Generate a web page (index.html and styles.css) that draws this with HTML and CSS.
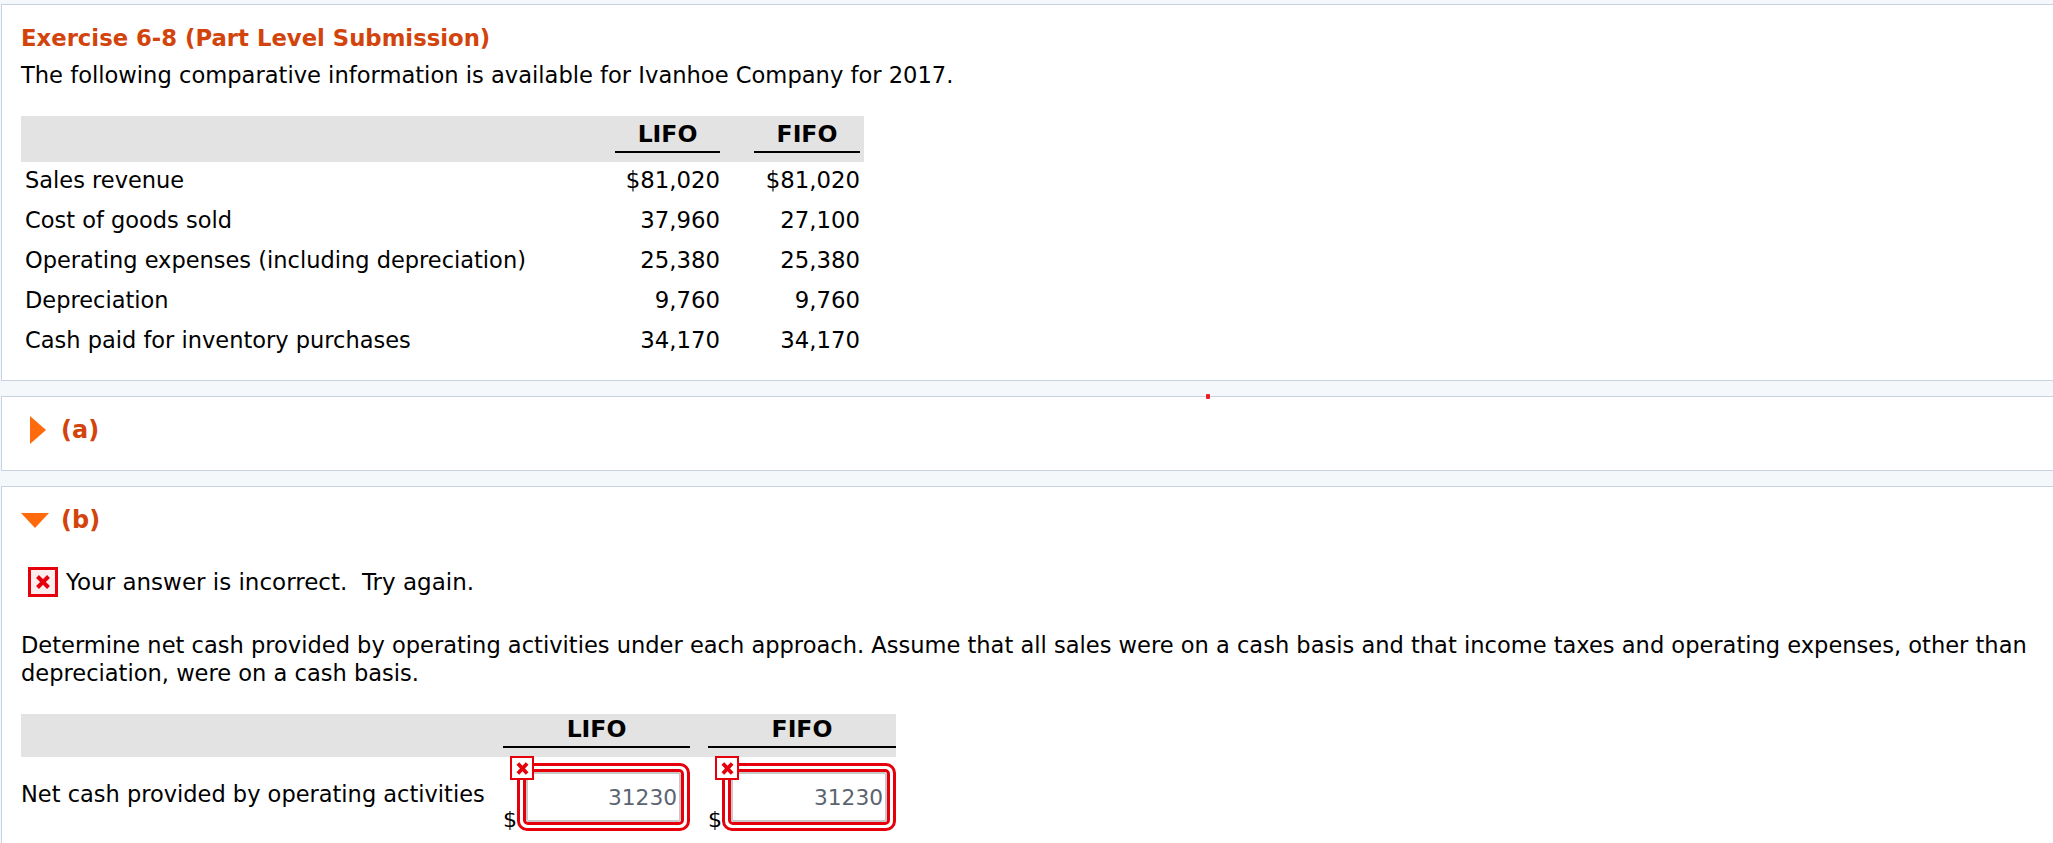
FILE: index.html
```html
<!DOCTYPE html>
<html lang="en">
<head>
    <meta charset="UTF-8">
    <title>Exercise 6-8</title>
    <link rel="stylesheet" href="styles.css">
</head>
<body>
    <div class="red-dot"></div>

    <div class="panel panel-intro">
        <h1 class="title">Exercise 6-8 (Part Level Submission)</h1>
        <p class="intro">The following comparative information is available for Ivanhoe Company for 2017.</p>

        <table class="info-table">
            <thead>
                <tr>
                    <th class="col-label"></th>
                    <th class="col-lifo"><span class="head-rule">LIFO</span></th>
                    <th class="col-fifo"><span class="head-rule">FIFO</span></th>
                </tr>
            </thead>
            <tbody>
                <tr><td>Sales revenue</td><td class="num">$81,020</td><td class="num">$81,020</td></tr>
                <tr><td>Cost of goods sold</td><td class="num">37,960</td><td class="num">27,100</td></tr>
                <tr><td>Operating expenses (including depreciation)</td><td class="num">25,380</td><td class="num">25,380</td></tr>
                <tr><td>Depreciation</td><td class="num">9,760</td><td class="num">9,760</td></tr>
                <tr><td>Cash paid for inventory purchases</td><td class="num">34,170</td><td class="num">34,170</td></tr>
            </tbody>
        </table>
    </div>

    <div class="panel panel-part panel-closed">
        <div class="part-head">
            <svg class="arrow arrow-right" viewBox="0 0 16 28"><polygon points="0,0 16,14 0,28"/></svg>
            <span class="part-name">(a)</span>
        </div>
    </div>

    <div class="panel panel-part panel-open">
        <div class="part-head">
            <svg class="arrow arrow-down" viewBox="0 0 28 15"><polygon points="0,0 28,0 14,15"/></svg>
            <span class="part-name">(b)</span>
        </div>

        <div class="feedback">
            <span class="x-box">
                <svg viewBox="0 0 14 14"><path d="M1.5 1.5 L12.5 12.5 M12.5 1.5 L1.5 12.5"/></svg>
            </span>
            <span>Your answer is incorrect.&nbsp; Try again.</span>
        </div>

        <p class="question">Determine net cash provided by operating activities under each approach. Assume that all sales were on a cash basis and that income taxes and operating expenses, other than depreciation, were on a cash basis.</p>

        <table class="answer-table">
            <thead>
                <tr>
                    <th class="ans-label"></th>
                    <th class="ans-lifo"><span class="head-rule">LIFO</span></th>
                    <th class="ans-fifo"><span class="head-rule">FIFO</span></th>
                </tr>
            </thead>
            <tbody>
                <tr>
                    <td class="ans-text">Net cash provided by operating activities</td>
                    <td class="ans-cell">
                        <div class="ans-field">
                            <span class="dollar">$</span>
                            <div class="wrong-outer">
                                <span class="x-mini"><svg viewBox="0 0 14 14"><path d="M2 1.5 L12 12.5 M12 1.5 L2 12.5"/></svg></span>
                                <div class="wrong-inner"><input class="ans-input" type="text" value="31230" readonly></div>
                            </div>
                        </div>
                    </td>
                    <td class="ans-cell ans-cell-fifo">
                        <div class="ans-field">
                            <span class="dollar">$</span>
                            <div class="wrong-outer">
                                <span class="x-mini"><svg viewBox="0 0 14 14"><path d="M2 1.5 L12 12.5 M12 1.5 L2 12.5"/></svg></span>
                                <div class="wrong-inner"><input class="ans-input" type="text" value="31230" readonly></div>
                            </div>
                        </div>
                    </td>
                </tr>
            </tbody>
        </table>
    </div>
</body>
</html>
```

FILE: styles.css
```css
html, body {
    height: 843px;
    overflow: hidden;
}
body {
    margin: 0;
    padding: 4px 0 0 1px;
    box-sizing: border-box;
    background-color: #f5f8fb;
    font-family: "DejaVu Sans", Verdana, sans-serif;
    font-size: 22.5px;
    color: #000;
    position: relative;
}
.red-dot {
    position: absolute;
    left: 1206px;
    top: 394px;
    width: 4px;
    height: 5px;
    border-radius: 1px;
    background: #ee1c25;
}
.panel {
    background: white;
    border: 1px solid #c9d2e2;
    border-right: none;
    margin-bottom: 15px;
    box-sizing: border-box;
}
.panel-intro {
    height: 377px;
    padding: 19px 0 0 19px;
}
.title {
    margin: 0;
    font-size: 22.75px;
    line-height: 28px;
    font-weight: bold;
    color: #d2440c;
}
.intro {
    margin: 9px 0 0;
    font-size: 22.6px;
    line-height: 28px;
}

/* first table */
table {
    border-collapse: collapse;
    table-layout: fixed;
}
.info-table {
    margin-top: 27px;
    width: 843px;
}
.info-table thead tr, .answer-table thead tr {
    background: #e3e3e3;
}
.info-table th, .answer-table th {
    padding: 0;
    font-size: 23.5px;
    vertical-align: top;
}
.info-table th {
    height: 46px;
}
.head-rule {
    display: block;
    text-align: center;
    border-bottom: 2px solid #000;
}
.info-table .head-rule {
    line-height: 33px;
    padding-top: 2px;
}
.col-label { width: 594px; }
.col-lifo { width: 105px; }
.info-table .col-fifo { padding: 0 4px 0 34px; }
.info-table td {
    height: 40px;
    padding: 0 0 0 4px;
    line-height: 36px;
    vertical-align: top;
}
.info-table td.num {
    text-align: right;
    font-size: 22.8px;
    padding: 0;
}
.info-table td.num + td.num {
    padding-right: 4px;
}

/* parts */
.panel-closed {
    height: 75px;
    padding: 19px 0 0 28px;
}
.panel-open {
    height: 357px;
    margin-bottom: 0;
    border-bottom: none;
    padding: 19px 0 0 19px;
}
.part-head {
    display: flex;
    align-items: center;
    gap: 15px;
    height: 28px;
}
.part-name {
    font-size: 24px;
    font-weight: bold;
    color: #d2440c;
}
.arrow polygon {
    fill: #ff6a0d;
}
.arrow-right {
    width: 16px;
    height: 28px;
}
.arrow-down {
    width: 28px;
    height: 15px;
}
.panel-open .part-head {
    gap: 12px;
}
.feedback {
    display: flex;
    align-items: center;
    gap: 8px;
    margin: 33px 0 0 7px;
    font-size: 23px;
    line-height: 30px;
}
.x-box {
    display: flex;
    align-items: center;
    justify-content: center;
    width: 30px;
    height: 30px;
    box-sizing: border-box;
    border: 3px solid #e5000b;
    background: #fbeeee;
}
.x-box svg {
    width: 14px;
    height: 14px;
}
.x-box path, .x-mini path {
    stroke: #e5000b;
    stroke-width: 4;
    fill: none;
}
.question {
    margin: 34px 0 0;
    font-size: 22.55px;
    line-height: 28px;
    padding-right: 8px;
}

/* answer table */
.answer-table {
    margin-top: 27px;
    width: 875px;
}
.ans-label { width: 482px; }
.ans-lifo { width: 187px; }
.answer-table .ans-fifo { padding-left: 18px; }
.answer-table th {
    height: 43px;
}
.answer-table .head-rule {
    line-height: 30px;
    padding-bottom: 2px;
}
.ans-text {
    padding: 0;
}
.ans-cell {
    padding: 6px 0 0;
}
.ans-cell-fifo {
    padding-left: 18px;
}
.ans-field {
    display: flex;
    align-items: flex-end;
}
.dollar {
    width: 14px;
    font-size: 22px;
    line-height: 24px;
    margin-bottom: -1px;
}
.wrong-outer {
    position: relative;
    flex: 1;
    height: 68px;
    box-sizing: border-box;
    border: 3px solid #e5000b;
    border-radius: 10px;
    padding: 3px;
}
.wrong-inner {
    height: 100%;
    box-sizing: border-box;
    border: 3px solid #e5000b;
    border-radius: 5px;
}
.ans-input {
    display: block;
    width: 100%;
    height: 100%;
    box-sizing: border-box;
    margin: 0;
    border: 2px solid #c8c8c8;
    border-radius: 3px;
    padding: 0 2px 0 0;
    text-align: right;
    font-family: "DejaVu Sans", Verdana, sans-serif;
    font-size: 21.7px;
    color: #5b6470;
    outline: none;
}
.x-mini {
    position: absolute;
    left: -10px;
    top: -10px;
    width: 24px;
    height: 24px;
    box-sizing: border-box;
    border: 2px solid #e5000b;
    background: white;
    display: flex;
    align-items: center;
    justify-content: center;
}
.x-mini svg {
    width: 13px;
    height: 13px;
}
```
